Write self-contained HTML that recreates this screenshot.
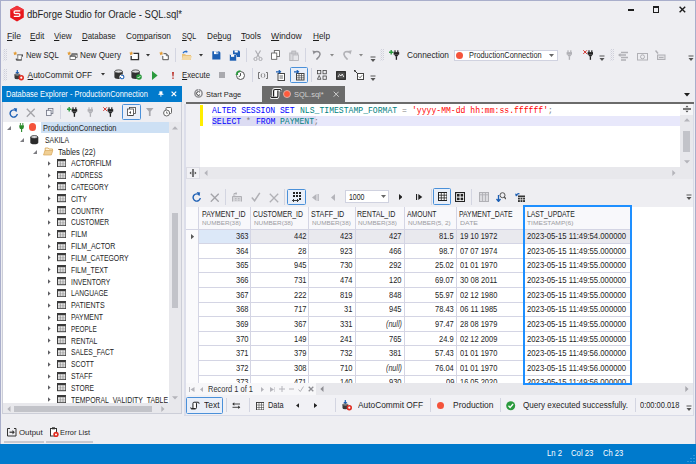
<!DOCTYPE html>
<html lang="en"><head><meta charset="utf-8"><title>dbForge Studio for Oracle - SQL.sql*</title>
<style>html,body{margin:0;padding:0}body{width:696px;height:464px;overflow:hidden;position:relative;background:#eeeef2;font-family:"Liberation Sans",sans-serif}
.a{position:absolute;display:block}
.t{position:absolute;white-space:pre;transform-origin:0 0}
u{text-decoration:underline;text-underline-offset:.6px;text-decoration-thickness:.8px}</style></head>
<body>
<div class="a" style="left:0px;top:0px;width:696px;height:464px;background:#eeeef2;"></div>
<div class="a" style="left:0px;top:0px;width:696px;height:1px;background:#a9aecb;"></div>
<div class="a" style="left:0px;top:0px;width:1px;height:464px;background:#a9aecb;"></div>
<div class="a" style="left:695px;top:0px;width:1px;height:464px;background:#a9aecb;"></div>
<svg class="a" style="left:9px;top:5px" width="16" height="18" viewBox="0 0 16 18"><polygon points="8,0.8 14.8,4.6 14.8,12.6 8,16.6 1.2,12.6 1.2,4.6" fill="#e8161c"/><polygon points="8,0.8 14.8,4.6 8,8.6 1.2,4.6" fill="#f0353a"/><path d="M11.2 5.9H6.4a1.35 1.35 0 0 0 0 2.7h3.2a1.35 1.35 0 0 1 0 2.7H4.8" fill="none" stroke="#fff" stroke-width="1.3"/></svg>
<span class="t" style="left:27.00px;top:10.00px;font-size:10px;line-height:10px;color:#1e1e1e;transform:scaleX(0.9485);">dbForge Studio for Oracle - SQL.sql*</span>
<div class="a" style="left:628px;top:9.4px;width:6.4px;height:2px;background:#1e1e1e;"></div>
<div class="a" style="left:652.8px;top:6.3px;width:6.4px;height:6.4px;border:1px solid #1e1e1e;box-sizing:border-box;border-top-width:2px;"></div>
<svg class="a" style="left:678px;top:5px" width="9" height="9" viewBox="0 0 9 9"><path d="M1.6 1.8L7.2 7.2M7.2 1.8L1.6 7.2" stroke="#1e1e1e" stroke-width="1.4" fill="none"/></svg>
<span class="t" style="left:6.70px;top:32.00px;font-size:8.4px;line-height:8.4px;color:#1e1e1e;transform:scaleX(1.0370);"><u>F</u>ile</span>
<span class="t" style="left:30.00px;top:32.00px;font-size:8.4px;line-height:8.4px;color:#1e1e1e;transform:scaleX(0.9905);"><u>E</u>dit</span>
<span class="t" style="left:54.00px;top:32.00px;font-size:8.4px;line-height:8.4px;color:#1e1e1e;transform:scaleX(0.9825);"><u>V</u>iew</span>
<span class="t" style="left:82.00px;top:32.00px;font-size:8.4px;line-height:8.4px;color:#1e1e1e;transform:scaleX(0.9398);"><u>D</u>atabase</span>
<span class="t" style="left:126.00px;top:32.00px;font-size:8.4px;line-height:8.4px;color:#1e1e1e;transform:scaleX(0.9965);">Co<u>m</u>parison</span>
<span class="t" style="left:181.70px;top:32.00px;font-size:8.4px;line-height:8.4px;color:#1e1e1e;transform:scaleX(0.8529);"><u>S</u>QL</span>
<span class="t" style="left:206.70px;top:32.00px;font-size:8.4px;line-height:8.4px;color:#1e1e1e;transform:scaleX(0.9843);">De<u>b</u>ug</span>
<span class="t" style="left:241.30px;top:32.00px;font-size:8.4px;line-height:8.4px;color:#1e1e1e;transform:scaleX(1.0224);"><u>T</u>ools</span>
<span class="t" style="left:271.30px;top:32.00px;font-size:8.4px;line-height:8.4px;color:#1e1e1e;transform:scaleX(1.0303);"><u>W</u>indow</span>
<span class="t" style="left:312.70px;top:32.00px;font-size:8.4px;line-height:8.4px;color:#1e1e1e;transform:scaleX(0.9864);"><u>H</u>elp</span>
<div class="a" style="left:3px;top:49px;width:4px;height:12px;background:conic-gradient(#cfd0db 25%,#eeeef2 0 50%,#e0e1e9 0 75%,#eeeef2 0) 0 0/2px 2px;"></div>
<div class="a" style="left:3px;top:69px;width:4px;height:12px;background:conic-gradient(#cfd0db 25%,#eeeef2 0 50%,#e0e1e9 0 75%,#eeeef2 0) 0 0/2px 2px;"></div>
<div class="a" style="left:380px;top:49px;width:4px;height:12px;background:conic-gradient(#cfd0db 25%,#eeeef2 0 50%,#e0e1e9 0 75%,#eeeef2 0) 0 0/2px 2px;"></div>
<div class="a" style="left:609.5px;top:49px;width:4px;height:12px;background:conic-gradient(#cfd0db 25%,#eeeef2 0 50%,#e0e1e9 0 75%,#eeeef2 0) 0 0/2px 2px;"></div>
<!--tb1-->
<span class="t" style="left:25.90px;top:51.00px;font-size:8.3px;line-height:8.3px;color:#1e1e1e;transform:scaleX(0.9207);">New SQL</span>
<span class="t" style="left:80.20px;top:51.00px;font-size:8.3px;line-height:8.3px;color:#1e1e1e;transform:scaleX(0.9880);">New Query</span>
<span class="t" style="left:407.00px;top:51.00px;font-size:8.3px;line-height:8.3px;color:#1e1e1e;">Connection</span>
<div class="a" style="left:453.5px;top:50px;width:104.5px;height:11.3px;background:#fff;border:1px solid #d0d2e0;box-sizing:border-box;"></div>
<div class="a" style="left:456px;top:52.2px;width:7px;height:7px;background:#f4533b;border-radius:3.5px;"></div>
<span class="t" style="left:469.00px;top:51.00px;font-size:8.3px;line-height:8.3px;color:#1e1e1e;transform:scaleX(0.8905);">ProductionConnection</span>
<svg class="a" style="left:549.2px;top:54px" width="5" height="3.5" viewBox="0 0 5 3.5"><path d="M0 0h5L2.5 3z" fill="#666"/></svg>
<span class="t" style="left:27.60px;top:71.00px;font-size:8.3px;line-height:8.3px;color:#1e1e1e;"><u>A</u>utoCommit OFF</span>
<span class="t" style="left:181.50px;top:71.00px;font-size:8.3px;line-height:8.3px;color:#1e1e1e;transform:scaleX(0.9338);"><u>E</u>xecute</span>
<svg class="a" style="left:101.4px;top:73px" width="4" height="3" viewBox="0 0 4 3"><path d="M0 0h4.0L2.0 2.5z" fill="#333"/></svg>
<svg class="a" style="left:146.4px;top:54px" width="4" height="3" viewBox="0 0 4 3"><path d="M0 0h4.0L2.0 2.5z" fill="#333"/></svg>
<svg class="a" style="left:199.4px;top:54px" width="4" height="3" viewBox="0 0 4 3"><path d="M0 0h4.0L2.0 2.5z" fill="#333"/></svg>
<svg class="a" style="left:329.7px;top:54px" width="4" height="3" viewBox="0 0 4 3"><path d="M0 0h4.0L2.0 2.5z" fill="#888"/></svg>
<svg class="a" style="left:359.4px;top:54px" width="4" height="3" viewBox="0 0 4 3"><path d="M0 0h4.0L2.0 2.5z" fill="#888"/></svg>
<svg class="a" style="left:370px;top:55.7px" width="6" height="7" viewBox="0 0 6 7"><rect x="0.5" y="0.5" width="5" height="1" fill="#555"/><path d="M0.5 3h5L3 6z" fill="#555"/></svg>
<svg class="a" style="left:370px;top:74.6px" width="6" height="7" viewBox="0 0 6 7"><rect x="0.5" y="0.5" width="5" height="1" fill="#555"/><path d="M0.5 3h5L3 6z" fill="#555"/></svg>
<svg class="a" style="left:599.4px;top:54.7px" width="6" height="7" viewBox="0 0 6 7"><rect x="0.5" y="0.5" width="5" height="1" fill="#555"/><path d="M0.5 3h5L3 6z" fill="#555"/></svg>
<svg class="a" style="left:687.5px;top:54.7px" width="6" height="7" viewBox="0 0 6 7"><rect x="0.5" y="0.5" width="5" height="1" fill="#555"/><path d="M0.5 3h5L3 6z" fill="#555"/></svg>
<div class="a" style="left:175px;top:48px;width:1px;height:14px;background:#d3d5e1;"></div>
<div class="a" style="left:245.5px;top:48px;width:1px;height:14px;background:#d3d5e1;"></div>
<div class="a" style="left:305px;top:48px;width:1px;height:14px;background:#d3d5e1;"></div>
<div class="a" style="left:251.5px;top:68px;width:1px;height:14px;background:#d3d5e1;"></div>
<div class="a" style="left:310.8px;top:68px;width:1px;height:14px;background:#d3d5e1;"></div>
<svg class="a" style="left:12.5px;top:50.8px" width="11" height="11" viewBox="0 0 11 11"><path d="M2.2 .2l.6 1.4 1.5.2-1.1 1 .3 1.5-1.3-.8-1.3.8.3-1.5-1.1-1 1.5-.2z" fill="#e29a32"/><path d="M4.2 4h5.8M9.2 4.2v1.6" stroke="#333" stroke-width="1.1" fill="none"/><rect x="4.8" y="4.5" width="3.6" height="4.2" fill="#fff"/><path d="M4.8 4.5v4.2M8.4 5.5v3.3" stroke="#555" stroke-width=".7"/><path d="M3.3 9h5.4" stroke="#333" stroke-width="1.2"/><path d="M3.3 7.5v1.5" stroke="#333" stroke-width=".9"/></svg>
<svg class="a" style="left:66.8px;top:50.8px" width="11" height="11" viewBox="0 0 11 11"><path d="M2.2 .2l.6 1.4 1.5.2-1.1 1 .3 1.5-1.3-.8-1.3.8.3-1.5-1.1-1 1.5-.2z" fill="#e29a32"/><rect x="4.8" y="2.8" width="5.3" height="3.8" fill="#fff" stroke="#444" stroke-width=".7"/><path d="M4.8 3.3h5.3" stroke="#444" stroke-width=".8"/><rect x="3" y="4.8" width="5.3" height="3.8" fill="#fff" stroke="#444" stroke-width=".7"/><path d="M3 5.3h5.3" stroke="#444" stroke-width=".8"/></svg>
<svg class="a" style="left:128.5px;top:50.8px" width="11" height="11" viewBox="0 0 11 11"><path d="M2.2 .2l.6 1.4 1.5.2-1.1 1 .3 1.5-1.3-.8-1.3.8.3-1.5-1.1-1 1.5-.2z" fill="#e29a32"/><path d="M4.5 2.4h5v6.2H2.2V5" fill="#fff" stroke="#333" stroke-width="1.3"/></svg>
<svg class="a" style="left:158.7px;top:50.8px" width="11" height="11" viewBox="0 0 11 11"><path d="M2.2 .2l.6 1.4 1.5.2-1.1 1 .3 1.5-1.3-.8-1.3.8.3-1.5-1.1-1 1.5-.2z" fill="#e29a32"/><path d="M4.5 2.7h2.8l2 2v4H3.8V5" fill="#fff" stroke="#444" stroke-width=".9"/><path d="M7.3 2.7v2h2" fill="none" stroke="#444" stroke-width=".7"/></svg>
<svg class="a" style="left:181px;top:49.5px" width="12" height="11" viewBox="0 0 12 11"><path d="M1 4h3l1 1h5v5H1z" fill="#e9c27c"/><path d="M.5 10l1.5-4h9l-1.5 4z" fill="#f3d9a6"/><path d="M2 3.2a3 3 0 0 1 4-1.5" stroke="#2a6fc9" fill="none" stroke-width="1.2"/><path d="M5 .2l2 1.8-2.4.8z" fill="#2a6fc9"/></svg>
<svg class="a" style="left:211.8px;top:50.8px" width="9" height="9" viewBox="0 0 9 9"><path d="M.3 .3h6.8l1.3 1.3v7h-8.1z" fill="#1c5fb4"/><rect x="2" y=".3" width="4.2" height="2.8" fill="#fff"/><rect x="4.5" y=".8" width="1.1" height="1.8" fill="#1c5fb4"/></svg>
<svg class="a" style="left:229px;top:49.5px" width="12" height="12" viewBox="0 0 12 12"><path d="M4 .5h6l1 1v5.5h-7z" fill="#1c5fb4"/><rect x="5.6" y=".5" width="3.2" height="2" fill="#fff"/><path d="M.5 4.5h6l1 1v5.5h-7z" fill="#1c5fb4" stroke="#eeeef2" stroke-width=".6"/><rect x="2" y="4.6" width="3.2" height="2.2" fill="#fff"/></svg>
<svg class="a" style="left:253px;top:49.5px" width="10" height="11" viewBox="0 0 10 11"><path d="M2.5 .5l4 7M7.5 .5l-4 7" stroke="#a9a9ae" stroke-width="1.1" fill="none"/><circle cx="2.5" cy="9" r="1.6" fill="none" stroke="#a9a9ae"/><circle cx="7.5" cy="9" r="1.6" fill="none" stroke="#a9a9ae"/></svg>
<svg class="a" style="left:271px;top:50.3px" width="10" height="10" viewBox="0 0 10 10"><rect x="3.3" y=".6" width="5.2" height="6" fill="#fff" stroke="#555" stroke-width=".8"/><rect x=".6" y="3" width="5.2" height="6.3" fill="#fff" stroke="#555" stroke-width=".8"/></svg>
<svg class="a" style="left:288.5px;top:49.5px" width="10.5" height="11" viewBox="0 0 10.5 11"><rect x=".8" y="3" width="8" height="7.5" fill="#d9d9dd" stroke="#b4b4b9"/><rect x="2.8" y="1" width="4" height="3" fill="#c9c9cd" stroke="#b4b4b9" stroke-width=".8"/><rect x="4" y="5" width="5.5" height="5.5" fill="#e6e6ea" stroke="#b4b4b9" stroke-width=".8"/></svg>
<svg class="a" style="left:312px;top:50px" width="10" height="10" viewBox="0 0 10 10"><path d="M2 2.2c3.5-1.5 6.3-.3 6 2.3-.2 2-2 3.5-3.6 5" stroke="#8e8e93" stroke-width="1.5" fill="none"/><path d="M.4 .6l3.8 .6-2.6 3.3z" fill="#8e8e93"/></svg>
<svg class="a" style="left:342px;top:50px" width="10" height="10" viewBox="0 0 10 10"><path d="M8 2.2c-3.5-1.5-6.3-.3-6 2.3.2 2 2 3.5 3.6 5" stroke="#b2b2b7" stroke-width="1.7" fill="none"/><path d="M9.8 .3l-4.2 .7 2.9 3.6z" fill="#b2b2b7"/></svg>
<svg class="a" style="left:389.4px;top:50.2px" width="10.5" height="10" viewBox="0 0 10.5 10"><g transform="translate(4.6,0.3)" fill="#222"><rect x=".8" y="0" width="1.2" height="2"/><rect x="3.6" y="0" width="1.2" height="2"/><rect x="0" y="1.8" width="5.6" height="2.5"/><path d="M.4 4.3h4.8L3.6 6.2H2z"/><rect x="2.15" y="6" width="1.3" height="3.5"/></g><path d="M0 2.3h4.4M2.2 .1v4.4" stroke="#2b9a3e" stroke-width="1.4"/></svg>
<svg class="a" style="left:561.8px;top:50.4px" width="10.5" height="10" viewBox="0 0 10.5 10"><g transform="translate(4.6,0.3)" fill="#b0b0b5"><rect x=".8" y="0" width="1.2" height="2"/><rect x="3.6" y="0" width="1.2" height="2"/><rect x="0" y="1.8" width="5.6" height="2.5"/><path d="M.4 4.3h4.8L3.6 6.2H2z"/><rect x="2.15" y="6" width="1.3" height="3.5"/></g></svg>
<svg class="a" style="left:582.6px;top:50.2px" width="10.5" height="10" viewBox="0 0 10.5 10"><g transform="translate(4.6,0.3)" fill="#222"><rect x=".8" y="0" width="1.2" height="2"/><rect x="3.6" y="0" width="1.2" height="2"/><rect x="0" y="1.8" width="5.6" height="2.5"/><path d="M.4 4.3h4.8L3.6 6.2H2z"/><rect x="2.15" y="6" width="1.3" height="3.5"/></g><path d="M.3 .3l3.6 3.6M3.9 .3L.3 3.9" stroke="#d2322d" stroke-width="1"/></svg>
<svg class="a" style="left:618px;top:50.5px" width="10.5" height="10.5" viewBox="0 0 10.5 10.5"><path d="M3 1.5h7M1 4h7M3 6.5h7M3 9h5" stroke="#b0b0b5" stroke-width="1.3"/><path d="M0 4l2.5-2v4z" fill="#b0b0b5"/></svg>
<svg class="a" style="left:636.5px;top:51.5px" width="11" height="9" viewBox="0 0 11 9"><rect x=".5" y="1.5" width="10" height="6.5" fill="none" stroke="#b0b0b5"/><circle cx="5.5" cy="4.8" r="2" fill="none" stroke="#b0b0b5"/></svg>
<svg class="a" style="left:655px;top:50px" width="10.5" height="10.5" viewBox="0 0 10.5 10.5"><path d="M.5 .5l2.5 3" stroke="#b0b0b5" stroke-width="1.5"/><rect x="2.5" y="5" width="7.5" height="4.5" fill="#dedee2" stroke="#b0b0b5"/><path d="M4 7.5h4.5" stroke="#b0b0b5"/></svg>
<svg class="a" style="left:14px;top:70px" width="10.5" height="10.5" viewBox="0 0 10.5 10.5"><path d="M3.3 0v3.2" stroke="#1c5fb4" stroke-width="1.2"/><path d="M1.3 2l2 2.2 2-2.2z" fill="#1c5fb4"/><path d="M.5 4.8v3.2a2.8 1.2 0 0 0 5.6 0V4.8" fill="#3a3a3a"/><ellipse cx="3.3" cy="4.8" rx="2.8" ry="1.1" fill="#8a8a8e" stroke="#3a3a3a" stroke-width=".5"/><circle cx="7.3" cy="7.7" r="2.7" fill="#e02b20"/><circle cx="7.3" cy="7.7" r="1.1" fill="#fff"/></svg>
<svg class="a" style="left:113.8px;top:69.3px" width="11.5" height="11" viewBox="0 0 11.5 11"><path d="M.4 2.5v5.5a4.2 1.9 0 0 0 8.4 0v-5.5" fill="#333"/><ellipse cx="4.6" cy="2.5" rx="3.8" ry="1.6" fill="#dcdcde" stroke="#333" stroke-width=".8"/><circle cx="8" cy="8" r="2.6" fill="#fff"/><path d="M6.3 8a1.8 1.8 0 1 0 1-1.6" stroke="#1c5fb4" fill="none" stroke-width="1.1"/></svg>
<svg class="a" style="left:131.2px;top:69.3px" width="11.5" height="11" viewBox="0 0 11.5 11"><path d="M.4 2.5v5.5a4.2 1.9 0 0 0 8.4 0v-5.5" fill="#333"/><ellipse cx="4.6" cy="2.5" rx="3.8" ry="1.6" fill="#dcdcde" stroke="#333" stroke-width=".8"/><circle cx="8" cy="8" r="2.8" fill="#2b9a3e"/><path d="M6.6 8l1 1 1.8-2" stroke="#fff" fill="none" stroke-width=".9"/></svg>
<svg class="a" style="left:152px;top:70.5px" width="6" height="9" viewBox="0 0 6 9"><path d="M0 0l5.6 4.5L0 9z" fill="#2b9a3e"/></svg>
<svg class="a" style="left:171.6px;top:71.7px" width="2" height="7" viewBox="0 0 2 7"><path d="M.1 0h1.8l-.4 4.5H.5z" fill="#b8261e"/><rect x=".35" y="5.5" width="1.3" height="1.4" fill="#b8261e"/></svg>
<div class="a" style="left:219px;top:72px;width:6px;height:6px;background:#a9a9ae;"></div>
<svg class="a" style="left:235px;top:69.5px" width="11" height="11" viewBox="0 0 11 11"><circle cx="5.5" cy="5.5" r="4" fill="#fff" stroke="#555" stroke-width="1"/><path d="M5.5 3.2v2.5l-1.8 1" stroke="#333" fill="none" stroke-width=".9"/><path d="M.3 4.5l2.5-2.5.4 3.3z" fill="#2b9a3e"/><path d="M1.5 3.5a4.3 4.3 0 0 1 4-2.5" stroke="#2b9a3e" fill="none" stroke-width="1.3"/></svg>
<svg class="a" style="left:258px;top:71.5px" width="10" height="7" viewBox="0 0 10 7"><path d="M2 .5H.5v6H2M8 .5h1.5v6H8" stroke="#555" fill="none" stroke-width=".8"/><path d="M4 1.5c-1 1-1 3 0 4M6 1.5c1 1 1 3 0 4" stroke="#555" fill="none" stroke-width=".8"/></svg>
<svg class="a" style="left:276px;top:69.5px" width="10" height="11" viewBox="0 0 10 11"><rect x="2" y="3.5" width="6.5" height="7" fill="#fff" stroke="#444"/><path d="M3.5 6h3.5M3.5 8h3.5" stroke="#444" stroke-width=".8"/><path d="M0 1.8h4M2.8 .2l1.7 1.6-1.7 1.6" stroke="#1c5fb4" fill="none" stroke-width="1.2"/></svg>
<div class="a" style="left:289.8px;top:67.3px;width:18.6px;height:16px;background:#e9eff9;border:1px solid #4a90d9;box-sizing:border-box;border-radius:1.5px;"></div>
<svg class="a" style="left:294px;top:70px" width="11" height="11" viewBox="0 0 11 11"><rect x="2.5" y="3.5" width="7.5" height="6.5" fill="#fff" stroke="#444"/><path d="M2.5 5.7h7.5M2.5 7.8h7.5M5 3.5v6.5M7.5 3.5v6.5" stroke="#444" stroke-width=".7"/><path d="M0 1.8h4M2.8 .2l1.7 1.6-1.7 1.6" stroke="#1c5fb4" fill="none" stroke-width="1.2"/></svg>
<svg class="a" style="left:317px;top:70px" width="10" height="10.5" viewBox="0 0 10 10.5"><rect x=".5" y=".5" width="3.3" height="3.3" fill="none" stroke="#444" stroke-width=".8"/><rect x="6" y=".5" width="3.3" height="3.3" fill="none" stroke="#444" stroke-width=".8"/><rect x="6" y="6" width="3.3" height="3.3" fill="none" stroke="#444" stroke-width=".8"/><path d="M2.2 5.5l1.8 3.8H.4z" fill="none" stroke="#444" stroke-width=".8"/></svg>
<svg class="a" style="left:335.5px;top:70.5px" width="10" height="9" viewBox="0 0 10 9"><rect x=".7" y=".7" width="8.6" height="7.6" fill="#555" stroke="#222" stroke-width="1.2"/><path d="M2 6l1.5-2.5 1.5 1.5 1.2-2 1.6 3" stroke="#fff" fill="none" stroke-width=".8"/></svg>
<svg class="a" style="left:353.5px;top:70px" width="10" height="10" viewBox="0 0 10 10"><rect x="3.5" y="3.5" width="6" height="6" fill="#fff" stroke="#444"/><path d="M4.8 6.5l1.3 1.3 2-2.5" stroke="#444" fill="none" stroke-width=".8"/><path d="M.5 .5l2.5 2.5" stroke="#333"/><rect x="0" y="0" width="1.6" height="1.6" fill="#333"/></svg>
<div class="a" style="left:2px;top:86px;width:180px;height:328px;background:#fff;border:1px solid #ccced8;box-sizing:border-box;"></div>
<div class="a" style="left:2px;top:86px;width:180px;height:15.5px;background:#007acc;"></div>
<span class="t" style="left:5.80px;top:90.00px;font-size:8.3px;line-height:8.3px;color:#fff;transform:scaleX(0.8996);">Database Explorer - ProductionConnection</span>
<svg class="a" style="left:158.4px;top:91px" width="6" height="6" viewBox="0 0 6 6"><path d="M1.4 .3h3v2.8h-3z" fill="#fff"/><path d="M.4 3.3h5" stroke="#fff" stroke-width="1"/><path d="M2.9 3.5v2.2" stroke="#fff" stroke-width=".9"/></svg>
<svg class="a" style="left:171.3px;top:90.6px" width="6" height="6" viewBox="0 0 6 6"><path d="M.6 .6l4.6 4.6M5.2 .6L.6 5.2" stroke="#fff" stroke-width="1.2"/></svg>
<div class="a" style="left:3px;top:101.5px;width:178px;height:20.4px;background:#eeeef2;"></div>
<svg class="a" style="left:8.5px;top:107.5px" width="9.5" height="10" viewBox="0 0 9.5 10"><path d="M7.6 3.3A3.6 3.6 0 1 0 8.3 6" stroke="#1c5fb4" fill="none" stroke-width="1.4"/><path d="M4.6 .1l3.6 .4-.9 3.2z" fill="#1c5fb4"/></svg>
<svg class="a" style="left:26px;top:108px" width="9.5" height="9.5" viewBox="0 0 9.5 9.5"><path d="M.8 .8L8.7 8.7M8.7 .8L.8 8.7" stroke="#a3a3a8" stroke-width="1.3"/></svg>
<svg class="a" style="left:46.3px;top:108.3px" width="8" height="8.5" viewBox="0 0 8 8.5"><rect x="2.3" y=".5" width="4.6" height="5" fill="#f4f6fb" stroke="#6d7180" stroke-width=".8"/><rect x=".5" y="2.3" width="4.6" height="5.2" fill="#f4f6fb" stroke="#6d7180" stroke-width=".8"/></svg>
<div class="a" style="left:60px;top:105px;width:1px;height:14px;background:#d3d5e1;"></div>
<svg class="a" style="left:67px;top:107px" width="10.5" height="10" viewBox="0 0 10.5 10"><g transform="translate(4.6,0.3)" fill="#222"><rect x=".8" y="0" width="1.2" height="2"/><rect x="3.6" y="0" width="1.2" height="2"/><rect x="0" y="1.8" width="5.6" height="2.5"/><path d="M.4 4.3h4.8L3.6 6.2H2z"/><rect x="2.15" y="6" width="1.3" height="3.5"/></g><path d="M0 2.3h4.4M2.2 .1v4.4" stroke="#2b9a3e" stroke-width="1.4"/></svg>
<svg class="a" style="left:82.8px;top:107.2px" width="10.5" height="10" viewBox="0 0 10.5 10"><g transform="translate(4.6,0.3)" fill="#b0b0b5"><rect x=".8" y="0" width="1.2" height="2"/><rect x="3.6" y="0" width="1.2" height="2"/><rect x="0" y="1.8" width="5.6" height="2.5"/><path d="M.4 4.3h4.8L3.6 6.2H2z"/><rect x="2.15" y="6" width="1.3" height="3.5"/></g></svg>
<svg class="a" style="left:103.4px;top:107px" width="10.5" height="10" viewBox="0 0 10.5 10"><g transform="translate(4.6,0.3)" fill="#222"><rect x=".8" y="0" width="1.2" height="2"/><rect x="3.6" y="0" width="1.2" height="2"/><rect x="0" y="1.8" width="5.6" height="2.5"/><path d="M.4 4.3h4.8L3.6 6.2H2z"/><rect x="2.15" y="6" width="1.3" height="3.5"/></g><path d="M.3 .3l3.6 3.6M3.9 .3L.3 3.9" stroke="#d2322d" stroke-width="1"/></svg>
<div class="a" style="left:122.3px;top:103.6px;width:18.4px;height:16.7px;background:#e9eff9;border:1px solid #4a90d9;box-sizing:border-box;border-radius:1.5px;"></div>
<svg class="a" style="left:126.5px;top:107px" width="10" height="10" viewBox="0 0 10 10"><rect x="2.5" y=".5" width="6" height="6" fill="#fff" stroke="#444" stroke-width=".8"/><rect x=".5" y="2" width="6" height="6.5" fill="#fff" stroke="#444" stroke-width=".8"/><path d="M2 5.5l2-1.5v3z" fill="#444"/><path d="M2 8.5h4" stroke="#444"/></svg>
<svg class="a" style="left:146px;top:108px" width="8" height="9" viewBox="0 0 8 9"><path d="M0 0h7.5L4.6 3.5V8H2.9V3.5z" fill="#a9a9ae"/></svg>
<svg class="a" style="left:162.5px;top:107px" width="9.5" height="10" viewBox="0 0 9.5 10"><rect x="3" y=".5" width="5.5" height="6" rx="1" fill="#fff" stroke="#555" stroke-width=".9"/><circle cx="3.6" cy="6" r="3" fill="#fff" stroke="#555" stroke-width=".9"/><path d="M3.6 4.5v1.7h1.3" stroke="#555" fill="none" stroke-width=".8"/></svg>
<div class="a" style="left:40.5px;top:121.9px;width:128.5px;height:11.3px;background:#cde0f4;"></div>
<svg class="a" style="left:7px;top:125.9px" width="4.5" height="4.5" viewBox="0 0 4.5 4.5"><path d="M4 0v4H0z" fill="#7d7d82"/></svg>
<svg class="a" style="left:19.3px;top:122.6px" width="5.5" height="9.5" viewBox="0 0 5.5 9.5"><path d="M1.4 0v2.5M3.8 0v2.5" stroke="#2a8a2a" stroke-width=".9"/><path d="M.3 2.3h4.6v1.8a2.3 2.2 0 0 1-4.6 0z" fill="#2a8a2a"/><path d="M2.6 6v3.3" stroke="#2a8a2a" stroke-width="1.1"/></svg>
<div class="a" style="left:29px;top:123.4px;width:7.2px;height:7.2px;background:#f4533b;border-radius:3.6px;"></div>
<span class="t" style="left:42.50px;top:124.00px;font-size:8.3px;line-height:8.3px;color:#1e1e1e;transform:scaleX(0.9003);">ProductionConnection</span>
<svg class="a" style="left:20px;top:137.72px" width="4.5" height="4.5" viewBox="0 0 4.5 4.5"><path d="M4 0v4H0z" fill="#7d7d82"/></svg>
<svg class="a" style="left:30.4px;top:135.02px" width="8.6" height="9.6" viewBox="0 0 8.6 9.6"><path d="M.3 2v5.5a4 1.8 0 0 0 8 0V2" fill="#2b2b2b"/><ellipse cx="4.3" cy="2" rx="3.6" ry="1.4" fill="#e6e6e8" stroke="#2b2b2b" stroke-width=".8"/></svg>
<span class="t" style="left:45.00px;top:136.00px;font-size:8.3px;line-height:8.3px;color:#1e1e1e;transform:scaleX(0.8258);">SAKILA</span>
<svg class="a" style="left:33px;top:149.54px" width="4.5" height="4.5" viewBox="0 0 4.5 4.5"><path d="M4 0v4H0z" fill="#7d7d82"/></svg>
<svg class="a" style="left:43px;top:146.54px" width="10.5" height="9" viewBox="0 0 10.5 9"><path d="M2.2 7.5V1h3l.8 1h3.5v1.5" fill="#fdf3dc" stroke="#d9a85a" stroke-width=".9"/><path d="M.5 8l1.5-4.5h7.8L8.3 8z" fill="#f0cf94" stroke="#d9a85a" stroke-width=".7"/></svg>
<span class="t" style="left:58.30px;top:148.00px;font-size:8.3px;line-height:8.3px;color:#1e1e1e;transform:scaleX(0.9112);">Tables (22)</span>
<div class="a" style="left:3px;top:121.9px;width:166px;height:281.3px;overflow:hidden">
<svg class="a" style="left:44.7px;top:38.96px" width="3.5" height="5"><path d="M0 .3l2.600 2.200L0 4.700z" fill="#5f5f64"/></svg>
<svg class="a" style="left:53.7px;top:36.96px" width="9.5" height="8.5"><rect x=".5" y=".5" width="8.3" height="7.2" fill="#fff" stroke="#3a3a3a" stroke-width="1"/><rect x=".5" y=".5" width="8.3" height="1.8" fill="#3a3a3a"/><path d="M.5 4.2h8.3M.5 6h8.3M3.3 2.3v5.4M6 2.3v5.4" stroke="#666" stroke-width=".5"/></svg>
<span class="t" style="left:68.30px;top:37.10px;font-size:8.3px;line-height:8.3px;color:#1e1e1e;transform:scaleX(0.8452);">ACTORFILM</span>
<svg class="a" style="left:44.7px;top:50.78px" width="3.5" height="5"><path d="M0 .3l2.600 2.200L0 4.700z" fill="#5f5f64"/></svg>
<svg class="a" style="left:53.7px;top:48.78px" width="9.5" height="8.5"><rect x=".5" y=".5" width="8.3" height="7.2" fill="#fff" stroke="#3a3a3a" stroke-width="1"/><rect x=".5" y=".5" width="8.3" height="1.8" fill="#3a3a3a"/><path d="M.5 4.2h8.3M.5 6h8.3M3.3 2.3v5.4M6 2.3v5.4" stroke="#666" stroke-width=".5"/></svg>
<span class="t" style="left:68.30px;top:49.10px;font-size:8.3px;line-height:8.3px;color:#1e1e1e;transform:scaleX(0.7900);">ADDRESS</span>
<svg class="a" style="left:44.7px;top:62.60px" width="3.5" height="5"><path d="M0 .3l2.600 2.200L0 4.700z" fill="#5f5f64"/></svg>
<svg class="a" style="left:53.7px;top:60.60px" width="9.5" height="8.5"><rect x=".5" y=".5" width="8.3" height="7.2" fill="#fff" stroke="#3a3a3a" stroke-width="1"/><rect x=".5" y=".5" width="8.3" height="1.8" fill="#3a3a3a"/><path d="M.5 4.2h8.3M.5 6h8.3M3.3 2.3v5.4M6 2.3v5.4" stroke="#666" stroke-width=".5"/></svg>
<span class="t" style="left:68.30px;top:61.10px;font-size:8.3px;line-height:8.3px;color:#1e1e1e;transform:scaleX(0.8166);">CATEGORY</span>
<svg class="a" style="left:44.7px;top:74.42px" width="3.5" height="5"><path d="M0 .3l2.600 2.200L0 4.700z" fill="#5f5f64"/></svg>
<svg class="a" style="left:53.7px;top:72.42px" width="9.5" height="8.5"><rect x=".5" y=".5" width="8.3" height="7.2" fill="#fff" stroke="#3a3a3a" stroke-width="1"/><rect x=".5" y=".5" width="8.3" height="1.8" fill="#3a3a3a"/><path d="M.5 4.2h8.3M.5 6h8.3M3.3 2.3v5.4M6 2.3v5.4" stroke="#666" stroke-width=".5"/></svg>
<span class="t" style="left:68.30px;top:73.10px;font-size:8.3px;line-height:8.3px;color:#1e1e1e;transform:scaleX(0.8463);">CITY</span>
<svg class="a" style="left:44.7px;top:86.24px" width="3.5" height="5"><path d="M0 .3l2.600 2.200L0 4.700z" fill="#5f5f64"/></svg>
<svg class="a" style="left:53.7px;top:84.24px" width="9.5" height="8.5"><rect x=".5" y=".5" width="8.3" height="7.2" fill="#fff" stroke="#3a3a3a" stroke-width="1"/><rect x=".5" y=".5" width="8.3" height="1.8" fill="#3a3a3a"/><path d="M.5 4.2h8.3M.5 6h8.3M3.3 2.3v5.4M6 2.3v5.4" stroke="#666" stroke-width=".5"/></svg>
<span class="t" style="left:68.30px;top:85.10px;font-size:8.3px;line-height:8.3px;color:#1e1e1e;transform:scaleX(0.8073);">COUNTRY</span>
<svg class="a" style="left:44.7px;top:98.06px" width="3.5" height="5"><path d="M0 .3l2.600 2.200L0 4.700z" fill="#5f5f64"/></svg>
<svg class="a" style="left:53.7px;top:96.06px" width="9.5" height="8.5"><rect x=".5" y=".5" width="8.3" height="7.2" fill="#fff" stroke="#3a3a3a" stroke-width="1"/><rect x=".5" y=".5" width="8.3" height="1.8" fill="#3a3a3a"/><path d="M.5 4.2h8.3M.5 6h8.3M3.3 2.3v5.4M6 2.3v5.4" stroke="#666" stroke-width=".5"/></svg>
<span class="t" style="left:68.30px;top:96.10px;font-size:8.3px;line-height:8.3px;color:#1e1e1e;transform:scaleX(0.8029);">CUSTOMER</span>
<svg class="a" style="left:44.7px;top:109.88px" width="3.5" height="5"><path d="M0 .3l2.600 2.200L0 4.700z" fill="#5f5f64"/></svg>
<svg class="a" style="left:53.7px;top:107.88px" width="9.5" height="8.5"><rect x=".5" y=".5" width="8.3" height="7.2" fill="#fff" stroke="#3a3a3a" stroke-width="1"/><rect x=".5" y=".5" width="8.3" height="1.8" fill="#3a3a3a"/><path d="M.5 4.2h8.3M.5 6h8.3M3.3 2.3v5.4M6 2.3v5.4" stroke="#666" stroke-width=".5"/></svg>
<span class="t" style="left:68.30px;top:108.10px;font-size:8.3px;line-height:8.3px;color:#1e1e1e;transform:scaleX(0.8463);">FILM</span>
<svg class="a" style="left:44.7px;top:121.70px" width="3.5" height="5"><path d="M0 .3l2.600 2.200L0 4.700z" fill="#5f5f64"/></svg>
<svg class="a" style="left:53.7px;top:119.70px" width="9.5" height="8.5"><rect x=".5" y=".5" width="8.3" height="7.2" fill="#fff" stroke="#3a3a3a" stroke-width="1"/><rect x=".5" y=".5" width="8.3" height="1.8" fill="#3a3a3a"/><path d="M.5 4.2h8.3M.5 6h8.3M3.3 2.3v5.4M6 2.3v5.4" stroke="#666" stroke-width=".5"/></svg>
<span class="t" style="left:68.30px;top:120.10px;font-size:8.3px;line-height:8.3px;color:#1e1e1e;transform:scaleX(0.8472);">FILM_ACTOR</span>
<svg class="a" style="left:44.7px;top:133.52px" width="3.5" height="5"><path d="M0 .3l2.600 2.200L0 4.700z" fill="#5f5f64"/></svg>
<svg class="a" style="left:53.7px;top:131.52px" width="9.5" height="8.5"><rect x=".5" y=".5" width="8.3" height="7.2" fill="#fff" stroke="#3a3a3a" stroke-width="1"/><rect x=".5" y=".5" width="8.3" height="1.8" fill="#3a3a3a"/><path d="M.5 4.2h8.3M.5 6h8.3M3.3 2.3v5.4M6 2.3v5.4" stroke="#666" stroke-width=".5"/></svg>
<span class="t" style="left:68.30px;top:132.10px;font-size:8.3px;line-height:8.3px;color:#1e1e1e;transform:scaleX(0.8325);">FILM_CATEGORY</span>
<svg class="a" style="left:44.7px;top:145.34px" width="3.5" height="5"><path d="M0 .3l2.600 2.200L0 4.700z" fill="#5f5f64"/></svg>
<svg class="a" style="left:53.7px;top:143.34px" width="9.5" height="8.5"><rect x=".5" y=".5" width="8.3" height="7.2" fill="#fff" stroke="#3a3a3a" stroke-width="1"/><rect x=".5" y=".5" width="8.3" height="1.8" fill="#3a3a3a"/><path d="M.5 4.2h8.3M.5 6h8.3M3.3 2.3v5.4M6 2.3v5.4" stroke="#666" stroke-width=".5"/></svg>
<span class="t" style="left:68.30px;top:144.10px;font-size:8.3px;line-height:8.3px;color:#1e1e1e;transform:scaleX(0.8274);">FILM_TEXT</span>
<svg class="a" style="left:44.7px;top:157.16px" width="3.5" height="5"><path d="M0 .3l2.600 2.200L0 4.700z" fill="#5f5f64"/></svg>
<svg class="a" style="left:53.7px;top:155.16px" width="9.5" height="8.5"><rect x=".5" y=".5" width="8.3" height="7.2" fill="#fff" stroke="#3a3a3a" stroke-width="1"/><rect x=".5" y=".5" width="8.3" height="1.8" fill="#3a3a3a"/><path d="M.5 4.2h8.3M.5 6h8.3M3.3 2.3v5.4M6 2.3v5.4" stroke="#666" stroke-width=".5"/></svg>
<span class="t" style="left:68.30px;top:156.10px;font-size:8.3px;line-height:8.3px;color:#1e1e1e;transform:scaleX(0.8190);">INVENTORY</span>
<svg class="a" style="left:44.7px;top:168.98px" width="3.5" height="5"><path d="M0 .3l2.600 2.200L0 4.700z" fill="#5f5f64"/></svg>
<svg class="a" style="left:53.7px;top:166.98px" width="9.5" height="8.5"><rect x=".5" y=".5" width="8.3" height="7.2" fill="#fff" stroke="#3a3a3a" stroke-width="1"/><rect x=".5" y=".5" width="8.3" height="1.8" fill="#3a3a3a"/><path d="M.5 4.2h8.3M.5 6h8.3M3.3 2.3v5.4M6 2.3v5.4" stroke="#666" stroke-width=".5"/></svg>
<span class="t" style="left:68.30px;top:167.10px;font-size:8.3px;line-height:8.3px;color:#1e1e1e;transform:scaleX(0.8024);">LANGUAGE</span>
<svg class="a" style="left:44.7px;top:180.80px" width="3.5" height="5"><path d="M0 .3l2.600 2.200L0 4.700z" fill="#5f5f64"/></svg>
<svg class="a" style="left:53.7px;top:178.80px" width="9.5" height="8.5"><rect x=".5" y=".5" width="8.3" height="7.2" fill="#fff" stroke="#3a3a3a" stroke-width="1"/><rect x=".5" y=".5" width="8.3" height="1.8" fill="#3a3a3a"/><path d="M.5 4.2h8.3M.5 6h8.3M3.3 2.3v5.4M6 2.3v5.4" stroke="#666" stroke-width=".5"/></svg>
<span class="t" style="left:68.30px;top:179.10px;font-size:8.3px;line-height:8.3px;color:#1e1e1e;transform:scaleX(0.8566);">PATIENTS</span>
<svg class="a" style="left:44.7px;top:192.62px" width="3.5" height="5"><path d="M0 .3l2.600 2.200L0 4.700z" fill="#5f5f64"/></svg>
<svg class="a" style="left:53.7px;top:190.62px" width="9.5" height="8.5"><rect x=".5" y=".5" width="8.3" height="7.2" fill="#fff" stroke="#3a3a3a" stroke-width="1"/><rect x=".5" y=".5" width="8.3" height="1.8" fill="#3a3a3a"/><path d="M.5 4.2h8.3M.5 6h8.3M3.3 2.3v5.4M6 2.3v5.4" stroke="#666" stroke-width=".5"/></svg>
<span class="t" style="left:68.30px;top:191.10px;font-size:8.3px;line-height:8.3px;color:#1e1e1e;transform:scaleX(0.8232);">PAYMENT</span>
<svg class="a" style="left:44.7px;top:204.44px" width="3.5" height="5"><path d="M0 .3l2.600 2.200L0 4.700z" fill="#5f5f64"/></svg>
<svg class="a" style="left:53.7px;top:202.44px" width="9.5" height="8.5"><rect x=".5" y=".5" width="8.3" height="7.2" fill="#fff" stroke="#3a3a3a" stroke-width="1"/><rect x=".5" y=".5" width="8.3" height="1.8" fill="#3a3a3a"/><path d="M.5 4.2h8.3M.5 6h8.3M3.3 2.3v5.4M6 2.3v5.4" stroke="#666" stroke-width=".5"/></svg>
<span class="t" style="left:68.30px;top:203.10px;font-size:8.3px;line-height:8.3px;color:#1e1e1e;transform:scaleX(0.7737);">PEOPLE</span>
<svg class="a" style="left:44.7px;top:216.26px" width="3.5" height="5"><path d="M0 .3l2.600 2.200L0 4.700z" fill="#5f5f64"/></svg>
<svg class="a" style="left:53.7px;top:214.26px" width="9.5" height="8.5"><rect x=".5" y=".5" width="8.3" height="7.2" fill="#fff" stroke="#3a3a3a" stroke-width="1"/><rect x=".5" y=".5" width="8.3" height="1.8" fill="#3a3a3a"/><path d="M.5 4.2h8.3M.5 6h8.3M3.3 2.3v5.4M6 2.3v5.4" stroke="#666" stroke-width=".5"/></svg>
<span class="t" style="left:68.30px;top:215.10px;font-size:8.3px;line-height:8.3px;color:#1e1e1e;transform:scaleX(0.8218);">RENTAL</span>
<svg class="a" style="left:44.7px;top:228.08px" width="3.5" height="5"><path d="M0 .3l2.600 2.200L0 4.700z" fill="#5f5f64"/></svg>
<svg class="a" style="left:53.7px;top:226.08px" width="9.5" height="8.5"><rect x=".5" y=".5" width="8.3" height="7.2" fill="#fff" stroke="#3a3a3a" stroke-width="1"/><rect x=".5" y=".5" width="8.3" height="1.8" fill="#3a3a3a"/><path d="M.5 4.2h8.3M.5 6h8.3M3.3 2.3v5.4M6 2.3v5.4" stroke="#666" stroke-width=".5"/></svg>
<span class="t" style="left:68.30px;top:226.10px;font-size:8.3px;line-height:8.3px;color:#1e1e1e;transform:scaleX(0.8178);">SALES_FACT</span>
<svg class="a" style="left:44.7px;top:239.90px" width="3.5" height="5"><path d="M0 .3l2.600 2.200L0 4.700z" fill="#5f5f64"/></svg>
<svg class="a" style="left:53.7px;top:237.90px" width="9.5" height="8.5"><rect x=".5" y=".5" width="8.3" height="7.2" fill="#fff" stroke="#3a3a3a" stroke-width="1"/><rect x=".5" y=".5" width="8.3" height="1.8" fill="#3a3a3a"/><path d="M.5 4.2h8.3M.5 6h8.3M3.3 2.3v5.4M6 2.3v5.4" stroke="#666" stroke-width=".5"/></svg>
<span class="t" style="left:68.30px;top:238.10px;font-size:8.3px;line-height:8.3px;color:#1e1e1e;transform:scaleX(0.8178);">SCOTT</span>
<svg class="a" style="left:44.7px;top:251.72px" width="3.5" height="5"><path d="M0 .3l2.600 2.200L0 4.700z" fill="#5f5f64"/></svg>
<svg class="a" style="left:53.7px;top:249.72px" width="9.5" height="8.5"><rect x=".5" y=".5" width="8.3" height="7.2" fill="#fff" stroke="#3a3a3a" stroke-width="1"/><rect x=".5" y=".5" width="8.3" height="1.8" fill="#3a3a3a"/><path d="M.5 4.2h8.3M.5 6h8.3M3.3 2.3v5.4M6 2.3v5.4" stroke="#666" stroke-width=".5"/></svg>
<span class="t" style="left:68.30px;top:250.10px;font-size:8.3px;line-height:8.3px;color:#1e1e1e;transform:scaleX(0.8341);">STAFF</span>
<svg class="a" style="left:44.7px;top:263.54px" width="3.5" height="5"><path d="M0 .3l2.600 2.200L0 4.700z" fill="#5f5f64"/></svg>
<svg class="a" style="left:53.7px;top:261.54px" width="9.5" height="8.5"><rect x=".5" y=".5" width="8.3" height="7.2" fill="#fff" stroke="#3a3a3a" stroke-width="1"/><rect x=".5" y=".5" width="8.3" height="1.8" fill="#3a3a3a"/><path d="M.5 4.2h8.3M.5 6h8.3M3.3 2.3v5.4M6 2.3v5.4" stroke="#666" stroke-width=".5"/></svg>
<span class="t" style="left:68.30px;top:262.10px;font-size:8.3px;line-height:8.3px;color:#1e1e1e;transform:scaleX(0.8088);">STORE</span>
<svg class="a" style="left:44.7px;top:275.36px" width="3.5" height="5"><path d="M0 .3l2.600 2.200L0 4.700z" fill="#5f5f64"/></svg>
<svg class="a" style="left:53.7px;top:273.36px" width="9.5" height="8.5"><rect x=".5" y=".5" width="8.3" height="7.2" fill="#fff" stroke="#3a3a3a" stroke-width="1"/><rect x=".5" y=".5" width="8.3" height="1.8" fill="#3a3a3a"/><path d="M.5 4.2h8.3M.5 6h8.3M3.3 2.3v5.4M6 2.3v5.4" stroke="#666" stroke-width=".5"/></svg>
<span class="t" style="left:68.30px;top:274.10px;font-size:8.3px;line-height:8.3px;color:#1e1e1e;transform:scaleX(0.8304);">TEMPORAL_VALIDITY_TABLE</span>
</div>
<div class="a" style="left:169px;top:121.9px;width:12px;height:281.4px;background:#e8e8ec;"></div>
<div class="a" style="left:172.3px;top:213px;width:6px;height:95.3px;background:#c2c3c9;"></div>
<svg class="a" style="left:172px;top:125.5px" width="6" height="4" viewBox="0 0 6 4"><path d="M0 3.5L3 .3l3 3.2z" fill="#b4b4ba"/></svg>
<svg class="a" style="left:172px;top:396px" width="6" height="4" viewBox="0 0 6 4"><path d="M0 .3L3 3.5 6 .3z" fill="#b4b4ba"/></svg>
<div class="a" style="left:3px;top:403.3px;width:178px;height:10.2px;background:#e8e8ec;"></div>
<div class="a" style="left:14px;top:405.5px;width:137.7px;height:6px;background:#c2c3c9;"></div>
<svg class="a" style="left:6.5px;top:405.5px" width="4" height="6" viewBox="0 0 4 6"><path d="M3.5 0L.3 3l3.2 3z" fill="#b4b4ba"/></svg>
<svg class="a" style="left:161px;top:405.5px" width="4" height="6" viewBox="0 0 4 6"><path d="M.3 0l3.2 3L.3 6z" fill="#b4b4ba"/></svg>
<div class="a" style="left:186px;top:102px;width:508px;height:2px;background:#6b6b6b;"></div>
<div class="a" style="left:262px;top:86px;width:83.3px;height:16.5px;background:#6b6b6b;"></div>
<svg class="a" style="left:193.8px;top:89.2px" width="9" height="9" viewBox="0 0 9 9"><circle cx="4.5" cy="4.4" r="3.6" fill="#f4f4f6" stroke="#8c8c90" stroke-width="1.5"/><path d="M5.9 3.2a1.9 1.9 0 1 0 0 2.5" stroke="#333" fill="none" stroke-width="1"/><path d="M4.5 .3v2" stroke="#eeeef2" stroke-width=".8"/></svg>
<span class="t" style="left:205.60px;top:91.00px;font-size:7.8px;line-height:7.8px;color:#1e1e1e;transform:scaleX(0.9554);">Start Page</span>
<svg class="a" style="left:269.6px;top:87.8px" width="12" height="11" viewBox="0 0 12 11"><path d="M3.6 8.6V2.9a1.4 1.4 0 0 1 1.4-1.4h4.9a1.1 1.1 0 0 1 1.1 1.1v.8M7.9 2.6v5.5a1.4 1.4 0 0 1-1.4 1.4H2a1.1 1.1 0 0 1-1.1-1.1v-.6" fill="none" stroke="#f4f4f4" stroke-width="3"/><rect x="4.2" y="2.6" width="3.2" height="6" fill="#fff"/><path d="M3.6 8.6V2.9a1.4 1.4 0 0 1 1.4-1.4h4.9a1.1 1.1 0 0 1 1.1 1.1v.8M7.9 2.6v5.5a1.4 1.4 0 0 1-1.4 1.4H2a1.1 1.1 0 0 1-1.1-1.1v-.6" fill="none" stroke="#1e1e1e" stroke-width="1.2"/><path d="M1.5 9.4h5" stroke="#1e1e1e" stroke-width="1.3"/></svg>
<div class="a" style="left:282.6px;top:89.7px;width:8.2px;height:8.2px;background:#ff5a3c;border:0.6px solid #d9b0a8;box-sizing:border-box;border-radius:4.1px;"></div>
<span class="t" style="left:294.00px;top:91.00px;font-size:7.8px;line-height:7.8px;color:#d0d0d0;transform:scaleX(0.9649);">SQL.sql*</span>
<svg class="a" style="left:332.5px;top:91px" width="6.5" height="6.5" viewBox="0 0 6.5 6.5"><path d="M.7 .7l5 5M5.7 .7l-5 5" stroke="#d0d0d0" stroke-width="1"/></svg>
<svg class="a" style="left:684px;top:92.5px" width="6" height="4" viewBox="0 0 6 4"><path d="M0 0h6.0L3.0 3.5z" fill="#1e1e1e"/></svg>
<div class="a" style="left:186px;top:104px;width:494px;height:63px;background:#fff;"></div>
<div class="a" style="left:186px;top:104px;width:14px;height:63px;background:#f0f0f4;"></div>
<div class="a" style="left:200px;top:105px;width:3.3px;height:21px;background:#ffee00;"></div>
<div class="a" style="left:212px;top:116px;width:468px;height:9.8px;background:#e8e8fb;"></div>
<div class="a" style="left:212px;top:116px;width:103.5px;height:9.8px;background:#dcdcf3;"></div>
<span class="t" style="left:212.40px;top:107.00px;font-size:8.7px;line-height:8.7px;color:#0000ff;font-family:'Liberation Mono',monospace;transform:scaleX(0.9315);">ALTER SESSION SET</span>
<span class="t" style="left:299.83px;top:107.00px;font-size:8.7px;line-height:8.7px;color:#008080;font-family:'Liberation Mono',monospace;transform:scaleX(0.9315);">NLS_TIMESTAMP_FORMAT</span>
<span class="t" style="left:401.82px;top:107.00px;font-size:8.7px;line-height:8.7px;color:#808080;font-family:'Liberation Mono',monospace;transform:scaleX(0.9307);">=</span>
<span class="t" style="left:411.54px;top:107.00px;font-size:8.7px;line-height:8.7px;color:#ff0000;font-family:'Liberation Mono',monospace;transform:scaleX(0.9316);">'yyyy-MM-dd hh:mm:ss.ffffff'</span>
<span class="t" style="left:547.53px;top:107.00px;font-size:8.7px;line-height:8.7px;color:#808080;font-family:'Liberation Mono',monospace;transform:scaleX(0.9307);">;</span>
<span class="t" style="left:212.40px;top:118.00px;font-size:8.7px;line-height:8.7px;color:#0000ff;font-family:'Liberation Mono',monospace;transform:scaleX(0.9316);">SELECT</span>
<span class="t" style="left:246.40px;top:118.00px;font-size:8.7px;line-height:8.7px;color:#808080;font-family:'Liberation Mono',monospace;transform:scaleX(0.9307);">*</span>
<span class="t" style="left:256.11px;top:118.00px;font-size:8.7px;line-height:8.7px;color:#0000ff;font-family:'Liberation Mono',monospace;transform:scaleX(0.9314);">FROM</span>
<span class="t" style="left:280.40px;top:118.00px;font-size:8.7px;line-height:8.7px;color:#008080;font-family:'Liberation Mono',monospace;transform:scaleX(0.9315);">PAYMENT</span>
<span class="t" style="left:314.40px;top:118.00px;font-size:8.7px;line-height:8.7px;color:#808080;font-family:'Liberation Mono',monospace;transform:scaleX(0.9307);">;</span>
<div class="a" style="left:680px;top:104px;width:12.5px;height:63px;background:#e8e8ec;"></div>
<div class="a" style="left:680px;top:104px;width:12.5px;height:10.5px;background:#f5f5f7;"></div>
<svg class="a" style="left:682.5px;top:105px" width="8" height="8" viewBox="0 0 8 8"><path d="M0 4h8" stroke="#222" stroke-width="1.2"/><path d="M2.5 2.3L4 .5l1.5 1.8zM2.5 5.7L4 7.5l1.5-1.8z" fill="#444"/></svg>
<svg class="a" style="left:683.5px;top:117.5px" width="6" height="4" viewBox="0 0 6 4"><path d="M0 3.5L3 .3l3 3.2z" fill="#b4b4ba"/></svg>
<div class="a" style="left:683px;top:131.3px;width:7px;height:20.4px;background:#c2c3c9;"></div>
<svg class="a" style="left:683.5px;top:160px" width="6" height="4" viewBox="0 0 6 4"><path d="M0 .3L3 3.5 6 .3z" fill="#b4b4ba"/></svg>
<div class="a" style="left:186px;top:167px;width:506.5px;height:12.3px;background:#e8e8ec;"></div>
<div class="a" style="left:186px;top:167px;width:13.5px;height:12.3px;background:#f1f1f5;border:1px solid #dcdce4;box-sizing:border-box;"></div>
<svg class="a" style="left:189px;top:169px" width="8" height="8" viewBox="0 0 8 8"><path d="M4 0v8" stroke="#222" stroke-width="1.2"/><path d="M2.3 2.5L.5 4l1.8 1.5zM5.7 2.5L7.5 4 5.7 5.5z" fill="#444"/></svg>
<svg class="a" style="left:203.5px;top:170px" width="4" height="6" viewBox="0 0 4 6"><path d="M3.5 0L.3 3l3.2 3z" fill="#b4b4ba"/></svg>
<svg class="a" style="left:672px;top:170px" width="4" height="6" viewBox="0 0 4 6"><path d="M.3 0l3.2 3L.3 6z" fill="#b4b4ba"/></svg>
<svg class="a" style="left:191.5px;top:192.4px" width="9.5" height="10" viewBox="0 0 9.5 10"><path d="M7.6 3.3A3.6 3.6 0 1 0 8.3 6" stroke="#1c5fb4" fill="none" stroke-width="1.4"/><path d="M4.6 .1l3.6 .4-.9 3.2z" fill="#1c5fb4"/></svg>
<svg class="a" style="left:209.5px;top:192.9px" width="9.5" height="9.5" viewBox="0 0 9.5 9.5"><path d="M.8 .8L8.7 8.7M8.7 .8L.8 8.7" stroke="#a3a3a8" stroke-width="1.3"/></svg>
<div class="a" style="left:225.4px;top:189.4px;width:1px;height:16px;background:#d3d5e1;"></div>
<svg class="a" style="left:232px;top:192.4px" width="10" height="10" viewBox="0 0 10 10"><path d="M.5 9.5v-5h9v5" fill="#d5d5d9" stroke="#b0b0b5"/><path d="M2 4V1.5h2.5M3.5 .2L5 1.5 3.5 2.8" stroke="#b0b0b5" fill="none"/><path d="M3 6.5h1.5M3 8.2h1.5M6 6.5h1.5M6 8.2h1.5" stroke="#b0b0b5" stroke-width=".8"/></svg>
<svg class="a" style="left:250.5px;top:192.4px" width="10" height="10" viewBox="0 0 10 10"><path d="M.8 5.5l2.8 3.3L8.8 .8" stroke="#b0b0b5" fill="none" stroke-width="1.5"/></svg>
<svg class="a" style="left:268.5px;top:192.9px" width="10" height="10" viewBox="0 0 10 10"><path d="M.8 .8L9.2 9.2M9.2 .8L.8 9.2" stroke="#b0b0b5" stroke-width="1.3"/></svg>
<div class="a" style="left:284.4px;top:189.4px;width:1px;height:16px;background:#d3d5e1;"></div>
<div class="a" style="left:287.2px;top:188.9px;width:18.7px;height:16px;background:#e9eff9;border:1px solid #4a90d9;box-sizing:border-box;border-radius:1.5px;"></div>
<svg class="a" style="left:291.5px;top:191.9px" width="10" height="10.5" viewBox="0 0 10 10.5"><g fill="#222"><rect x="1" y="0" width="2" height="2"/><rect x="4" y="0" width="2" height="2"/><rect x="7" y="0" width="2" height="2"/><rect x="1" y="3" width="2" height="2"/><rect x="4" y="3" width="2" height="2"/><rect x="7" y="3" width="2" height="2"/><rect x="7" y="6" width="2" height="2"/></g><path d="M.5 8.5h6M2 7l-1.5 1.5L2 10M5 7l1.5 1.5L5 10" stroke="#222" fill="none" stroke-width=".9"/></svg>
<svg class="a" style="left:311.5px;top:193.9px" width="7.5" height="7" viewBox="0 0 7.5 7"><path d="M4.5 0L0 3.5 4.5 7z" fill="#b4b4ba"/><rect x="5.5" y="0" width="1.3" height="7" fill="#b4b4ba"/></svg>
<svg class="a" style="left:331px;top:193.9px" width="4" height="7" viewBox="0 0 4 7"><path d="M4 0L0 3.5 4 7z" fill="#b4b4ba"/></svg>
<div class="a" style="left:344.8px;top:190.1px;width:43.8px;height:13.4px;background:#fff;border:1px solid #d0d2e0;box-sizing:border-box;"></div>
<span class="t" style="left:349.00px;top:193.00px;font-size:8.3px;line-height:8.3px;color:#1e1e1e;transform:scaleX(0.8393);">1000</span>
<svg class="a" style="left:380.5px;top:195.4px" width="5" height="3.5" viewBox="0 0 5 3.5"><path d="M0 0h5L2.5 3z" fill="#666"/></svg>
<svg class="a" style="left:398.7px;top:194.2px" width="3.5" height="6" viewBox="0 0 3.5 6"><path d="M0 0l3.5 3L0 6z" fill="#222"/></svg>
<svg class="a" style="left:416px;top:194.2px" width="6.5" height="6" viewBox="0 0 6.5 6"><rect x="0" y="0" width="1.1" height="6" fill="#222"/><path d="M2.3 0L6.3 3 2.3 6z" fill="#222"/></svg>
<div class="a" style="left:430.7px;top:189.4px;width:1px;height:16px;background:#d3d5e1;"></div>
<div class="a" style="left:433px;top:188.4px;width:18px;height:16.5px;background:#e9eff9;border:1px solid #4a90d9;box-sizing:border-box;border-radius:1.5px;"></div>
<svg class="a" style="left:437.5px;top:192.4px" width="9.5" height="9" viewBox="0 0 9.5 9"><rect x=".5" y=".5" width="8.5" height="8" fill="#fff" stroke="#222"/><path d="M.5 3.2h8.5M.5 5.9h8.5M3.3 .5v8M6.2 .5v8" stroke="#222" stroke-width=".8"/></svg>
<svg class="a" style="left:455px;top:191.9px" width="10.2" height="10.2" viewBox="0 0 10.2 10.2"><rect x=".6" y=".6" width="9" height="9" fill="#fff" stroke="#222" stroke-width="1.2"/><rect x="2" y="2" width="2.6" height="2.6" fill="#222"/><rect x="5.6" y="2" width="2.6" height="2.6" fill="#222"/><rect x="2" y="5.6" width="2.6" height="2.6" fill="#222"/><rect x="5.6" y="5.6" width="2.6" height="2.6" fill="#222"/></svg>
<div class="a" style="left:471.2px;top:189.4px;width:1px;height:16px;background:#d3d5e1;"></div>
<svg class="a" style="left:478.5px;top:191.9px" width="10" height="10" viewBox="0 0 10 10"><rect x=".5" y=".5" width="9" height="9" fill="#dcdce0" stroke="#b0b0b5"/><path d="M.5 2.8h9M3.5 .5v9M6.5 .5v9" stroke="#b0b0b5" stroke-width=".9"/></svg>
<svg class="a" style="left:495.5px;top:191.9px" width="10.5" height="10.5" viewBox="0 0 10.5 10.5"><circle cx="6.5" cy="3.2" r="2.5" fill="none" stroke="#555" stroke-width="1"/><path d="M8.3 5l1.7 2" stroke="#555" stroke-width="1.3"/><path d="M2.5 3v6M.5 7l2 2.5L4.5 7" stroke="#1c5fb4" fill="none" stroke-width="1.3"/></svg>
<svg class="a" style="left:514.5px;top:191.9px" width="10.5" height="10.5" viewBox="0 0 10.5 10.5"><rect x="3" y="3.5" width="7" height="6.5" fill="#333"/><path d="M3 5.5h7M5.3 5.5v4.5M7.6 5.5v4.5M3 7.7h7" stroke="#fff" stroke-width=".6"/><path d="M4.5 2A2.5 2.5 0 0 0 1 3.5" stroke="#1c5fb4" fill="none" stroke-width="1.2"/><path d="M0 1.5l1 3 2.3-1.7z" fill="#1c5fb4"/></svg>
<svg class="a" style="left:685.5px;top:194.4px" width="6" height="7" viewBox="0 0 6 7"><rect x="0.5" y="0.5" width="5" height="1" fill="#555"/><path d="M0.5 3h5L3 6z" fill="#555"/></svg>
<div class="a" style="left:186px;top:206.8px;width:506.7px;height:176px;background:#fff;"></div>
<div class="a" style="left:186px;top:206.8px;width:445px;height:22.8px;background:#f8f8fb;"></div>
<div class="a" style="left:198.6px;top:229px;width:432.4px;height:14.6px;background:#e9e9ee;"></div>
<div class="a" style="left:198.6px;top:229px;width:52px;height:14.6px;background:#dce8f8;"></div>
<div class="a" style="left:186px;top:207.2px;width:12.6px;height:175.5px;background:#fafafc;"></div>
<div class="a" style="left:186px;top:207.2px;width:498px;height:175.5px;overflow:hidden">
<div class="a" style="left:12.1px;top:0;width:1px;height:176px;background:#d4d5e4"></div>
<div class="a" style="left:64.1px;top:0;width:1px;height:176px;background:#d4d5e4"></div>
<div class="a" style="left:121.8px;top:0;width:1px;height:176px;background:#d4d5e4"></div>
<div class="a" style="left:169px;top:0;width:1px;height:176px;background:#d4d5e4"></div>
<div class="a" style="left:217.6px;top:0;width:1px;height:176px;background:#d4d5e4"></div>
<div class="a" style="left:269.9px;top:0;width:1px;height:176px;background:#d4d5e4"></div>
<div class="a" style="left:336.5px;top:0;width:1px;height:176px;background:#d4d5e4"></div>
<div class="a" style="left:0;top:22px;width:445px;height:1px;background:#d4d5e4"></div>
<div class="a" style="left:12.6px;top:35.91px;width:432.4px;height:1px;background:#d4d5e4"></div>
<div class="a" style="left:12.6px;top:50.52px;width:432.4px;height:1px;background:#d4d5e4"></div>
<div class="a" style="left:12.6px;top:65.13px;width:432.4px;height:1px;background:#d4d5e4"></div>
<div class="a" style="left:12.6px;top:79.74px;width:432.4px;height:1px;background:#d4d5e4"></div>
<div class="a" style="left:12.6px;top:94.35px;width:432.4px;height:1px;background:#d4d5e4"></div>
<div class="a" style="left:12.6px;top:108.96px;width:432.4px;height:1px;background:#d4d5e4"></div>
<div class="a" style="left:12.6px;top:123.57px;width:432.4px;height:1px;background:#d4d5e4"></div>
<div class="a" style="left:12.6px;top:138.18px;width:432.4px;height:1px;background:#d4d5e4"></div>
<div class="a" style="left:12.6px;top:152.79px;width:432.4px;height:1px;background:#d4d5e4"></div>
<div class="a" style="left:12.6px;top:167.40px;width:432.4px;height:1px;background:#d4d5e4"></div>
<div class="a" style="left:12.6px;top:182.01px;width:432.4px;height:1px;background:#d4d5e4"></div>
</div>
<svg class="a" style="left:190.9px;top:234.2px" width="3.5" height="5.5" viewBox="0 0 3.5 5.5"><path d="M0 0l3.2 2.6L0 5.2z" fill="#5a5a5a"/></svg>
<span class="t" style="left:201.60px;top:210.00px;font-size:8.3px;line-height:8.3px;color:#1e1e1e;transform:scaleX(0.8417);">PAYMENT_ID</span>
<span class="t" style="left:202.00px;top:220.00px;font-size:6.2px;line-height:6.2px;color:#9c9ca2;transform:scaleX(1.0257);">NUMBER(38)</span>
<span class="t" style="left:252.90px;top:210.00px;font-size:8.3px;line-height:8.3px;color:#1e1e1e;transform:scaleX(0.8282);">CUSTOMER_ID</span>
<span class="t" style="left:253.50px;top:220.00px;font-size:6.2px;line-height:6.2px;color:#9c9ca2;transform:scaleX(1.0310);">NUMBER(38)</span>
<span class="t" style="left:311.40px;top:210.00px;font-size:8.3px;line-height:8.3px;color:#1e1e1e;transform:scaleX(0.8632);">STAFF_ID</span>
<span class="t" style="left:311.90px;top:220.00px;font-size:6.2px;line-height:6.2px;color:#9c9ca2;transform:scaleX(1.0257);">NUMBER(38)</span>
<span class="t" style="left:357.30px;top:210.00px;font-size:8.3px;line-height:8.3px;color:#1e1e1e;transform:scaleX(0.8505);">RENTAL_ID</span>
<span class="t" style="left:357.60px;top:220.00px;font-size:6.2px;line-height:6.2px;color:#9c9ca2;transform:scaleX(1.0257);">NUMBER(38)</span>
<span class="t" style="left:406.70px;top:210.00px;font-size:8.3px;line-height:8.3px;color:#1e1e1e;transform:scaleX(0.8205);">AMOUNT</span>
<span class="t" style="left:407.80px;top:220.00px;font-size:6.2px;line-height:6.2px;color:#9c9ca2;transform:scaleX(1.0323);">NUMBER(5, 2)</span>
<span class="t" style="left:459.00px;top:210.00px;font-size:8.3px;line-height:8.3px;color:#1e1e1e;transform:scaleX(0.8229);">PAYMENT_DATE</span>
<span class="t" style="left:459.50px;top:220.00px;font-size:6.2px;line-height:6.2px;color:#9c9ca2;transform:scaleX(1.1217);">DATE</span>
<span class="t" style="left:526.80px;top:210.00px;font-size:8.3px;line-height:8.3px;color:#1e1e1e;transform:scaleX(0.8184);">LAST_UPDATE</span>
<span class="t" style="left:527.30px;top:220.00px;font-size:6.2px;line-height:6.2px;color:#9c9ca2;transform:scaleX(1.0763);">TIMESTAMP(6)</span>
<div class="a" style="left:186px;top:229px;width:498px;height:153.5px;overflow:hidden">
<span class="t" style="left:49.57px;top:3.00px;font-size:8.3px;line-height:8.3px;color:#1e1e1e;transform:scaleX(0.9050);">363</span>
<span class="t" style="left:107.97px;top:3.00px;font-size:8.3px;line-height:8.3px;color:#1e1e1e;transform:scaleX(0.9050);">442</span>
<span class="t" style="left:153.77px;top:3.00px;font-size:8.3px;line-height:8.3px;color:#1e1e1e;transform:scaleX(0.9050);">423</span>
<span class="t" style="left:203.27px;top:3.00px;font-size:8.3px;line-height:8.3px;color:#1e1e1e;transform:scaleX(0.9050);">427</span>
<span class="t" style="left:253.48px;top:3.00px;font-size:8.3px;line-height:8.3px;color:#1e1e1e;transform:scaleX(0.9050);">81.5</span>
<span class="t" style="left:273.70px;top:3.00px;font-size:8.3px;line-height:8.3px;color:#1e1e1e;transform:scaleX(0.8981);">19 10 1972</span>
<span class="t" style="left:340.80px;top:3.00px;font-size:8.3px;line-height:8.3px;color:#1e1e1e;transform:scaleX(0.9312);">2023-05-15 11:49:54.000000</span>
<span class="t" style="left:49.57px;top:18.00px;font-size:8.3px;line-height:8.3px;color:#1e1e1e;transform:scaleX(0.9050);">364</span>
<span class="t" style="left:112.14px;top:18.00px;font-size:8.3px;line-height:8.3px;color:#1e1e1e;transform:scaleX(0.9050);">28</span>
<span class="t" style="left:153.77px;top:18.00px;font-size:8.3px;line-height:8.3px;color:#1e1e1e;transform:scaleX(0.9050);">923</span>
<span class="t" style="left:203.27px;top:18.00px;font-size:8.3px;line-height:8.3px;color:#1e1e1e;transform:scaleX(0.9050);">466</span>
<span class="t" style="left:253.48px;top:18.00px;font-size:8.3px;line-height:8.3px;color:#1e1e1e;transform:scaleX(0.9050);">98.7</span>
<span class="t" style="left:273.70px;top:18.00px;font-size:8.3px;line-height:8.3px;color:#1e1e1e;transform:scaleX(0.8981);">07 07 1974</span>
<span class="t" style="left:340.80px;top:18.00px;font-size:8.3px;line-height:8.3px;color:#1e1e1e;transform:scaleX(0.9312);">2023-05-15 11:49:55.000000</span>
<span class="t" style="left:49.57px;top:32.00px;font-size:8.3px;line-height:8.3px;color:#1e1e1e;transform:scaleX(0.9050);">365</span>
<span class="t" style="left:107.97px;top:32.00px;font-size:8.3px;line-height:8.3px;color:#1e1e1e;transform:scaleX(0.9050);">945</span>
<span class="t" style="left:153.77px;top:32.00px;font-size:8.3px;line-height:8.3px;color:#1e1e1e;transform:scaleX(0.9050);">730</span>
<span class="t" style="left:203.27px;top:32.00px;font-size:8.3px;line-height:8.3px;color:#1e1e1e;transform:scaleX(0.9050);">292</span>
<span class="t" style="left:249.31px;top:32.00px;font-size:8.3px;line-height:8.3px;color:#1e1e1e;transform:scaleX(0.9050);">25.02</span>
<span class="t" style="left:273.70px;top:32.00px;font-size:8.3px;line-height:8.3px;color:#1e1e1e;transform:scaleX(0.8981);">01 01 1970</span>
<span class="t" style="left:340.80px;top:32.00px;font-size:8.3px;line-height:8.3px;color:#1e1e1e;transform:scaleX(0.9312);">2023-05-15 11:49:55.000000</span>
<span class="t" style="left:49.57px;top:47.00px;font-size:8.3px;line-height:8.3px;color:#1e1e1e;transform:scaleX(0.9050);">366</span>
<span class="t" style="left:107.97px;top:47.00px;font-size:8.3px;line-height:8.3px;color:#1e1e1e;transform:scaleX(0.9050);">731</span>
<span class="t" style="left:153.77px;top:47.00px;font-size:8.3px;line-height:8.3px;color:#1e1e1e;transform:scaleX(0.9050);">474</span>
<span class="t" style="left:203.27px;top:47.00px;font-size:8.3px;line-height:8.3px;color:#1e1e1e;transform:scaleX(0.9050);">120</span>
<span class="t" style="left:249.31px;top:47.00px;font-size:8.3px;line-height:8.3px;color:#1e1e1e;transform:scaleX(0.9050);">69.07</span>
<span class="t" style="left:273.70px;top:47.00px;font-size:8.3px;line-height:8.3px;color:#1e1e1e;transform:scaleX(0.9115);">30 08 2011</span>
<span class="t" style="left:340.80px;top:47.00px;font-size:8.3px;line-height:8.3px;color:#1e1e1e;transform:scaleX(0.9312);">2023-05-15 11:49:55.000000</span>
<span class="t" style="left:49.57px;top:62.00px;font-size:8.3px;line-height:8.3px;color:#1e1e1e;transform:scaleX(0.9050);">367</span>
<span class="t" style="left:107.97px;top:62.00px;font-size:8.3px;line-height:8.3px;color:#1e1e1e;transform:scaleX(0.9050);">222</span>
<span class="t" style="left:153.77px;top:62.00px;font-size:8.3px;line-height:8.3px;color:#1e1e1e;transform:scaleX(0.9050);">819</span>
<span class="t" style="left:203.27px;top:62.00px;font-size:8.3px;line-height:8.3px;color:#1e1e1e;transform:scaleX(0.9050);">848</span>
<span class="t" style="left:249.31px;top:62.00px;font-size:8.3px;line-height:8.3px;color:#1e1e1e;transform:scaleX(0.9050);">55.97</span>
<span class="t" style="left:273.70px;top:62.00px;font-size:8.3px;line-height:8.3px;color:#1e1e1e;transform:scaleX(0.8981);">02 12 1980</span>
<span class="t" style="left:340.80px;top:62.00px;font-size:8.3px;line-height:8.3px;color:#1e1e1e;transform:scaleX(0.9312);">2023-05-15 11:49:55.000000</span>
<span class="t" style="left:49.57px;top:76.00px;font-size:8.3px;line-height:8.3px;color:#1e1e1e;transform:scaleX(0.9050);">368</span>
<span class="t" style="left:107.97px;top:76.00px;font-size:8.3px;line-height:8.3px;color:#1e1e1e;transform:scaleX(0.9050);">717</span>
<span class="t" style="left:157.94px;top:76.00px;font-size:8.3px;line-height:8.3px;color:#1e1e1e;transform:scaleX(0.9050);">31</span>
<span class="t" style="left:203.27px;top:76.00px;font-size:8.3px;line-height:8.3px;color:#1e1e1e;transform:scaleX(0.9050);">945</span>
<span class="t" style="left:249.31px;top:76.00px;font-size:8.3px;line-height:8.3px;color:#1e1e1e;transform:scaleX(0.9050);">78.43</span>
<span class="t" style="left:273.70px;top:76.00px;font-size:8.3px;line-height:8.3px;color:#1e1e1e;transform:scaleX(0.9115);">06 11 1985</span>
<span class="t" style="left:340.80px;top:76.00px;font-size:8.3px;line-height:8.3px;color:#1e1e1e;transform:scaleX(0.9312);">2023-05-15 11:49:55.000000</span>
<span class="t" style="left:49.57px;top:91.00px;font-size:8.3px;line-height:8.3px;color:#1e1e1e;transform:scaleX(0.9050);">369</span>
<span class="t" style="left:107.97px;top:91.00px;font-size:8.3px;line-height:8.3px;color:#1e1e1e;transform:scaleX(0.9050);">367</span>
<span class="t" style="left:153.77px;top:91.00px;font-size:8.3px;line-height:8.3px;color:#1e1e1e;transform:scaleX(0.9050);">331</span>
<span class="t" style="left:199.93px;top:91.00px;font-size:8.3px;line-height:8.3px;color:#333;font-style:italic;transform:scaleX(0.8600);">(null)</span>
<span class="t" style="left:249.31px;top:91.00px;font-size:8.3px;line-height:8.3px;color:#1e1e1e;transform:scaleX(0.9050);">97.47</span>
<span class="t" style="left:273.70px;top:91.00px;font-size:8.3px;line-height:8.3px;color:#1e1e1e;transform:scaleX(0.8981);">28 08 1979</span>
<span class="t" style="left:340.80px;top:91.00px;font-size:8.3px;line-height:8.3px;color:#1e1e1e;transform:scaleX(0.9312);">2023-05-15 11:49:55.000000</span>
<span class="t" style="left:49.57px;top:106.00px;font-size:8.3px;line-height:8.3px;color:#1e1e1e;transform:scaleX(0.9050);">370</span>
<span class="t" style="left:107.97px;top:106.00px;font-size:8.3px;line-height:8.3px;color:#1e1e1e;transform:scaleX(0.9050);">149</span>
<span class="t" style="left:153.77px;top:106.00px;font-size:8.3px;line-height:8.3px;color:#1e1e1e;transform:scaleX(0.9050);">241</span>
<span class="t" style="left:203.27px;top:106.00px;font-size:8.3px;line-height:8.3px;color:#1e1e1e;transform:scaleX(0.9050);">765</span>
<span class="t" style="left:253.48px;top:106.00px;font-size:8.3px;line-height:8.3px;color:#1e1e1e;transform:scaleX(0.9050);">24.9</span>
<span class="t" style="left:273.70px;top:106.00px;font-size:8.3px;line-height:8.3px;color:#1e1e1e;transform:scaleX(0.8981);">02 12 2009</span>
<span class="t" style="left:340.80px;top:106.00px;font-size:8.3px;line-height:8.3px;color:#1e1e1e;transform:scaleX(0.9312);">2023-05-15 11:49:55.000000</span>
<span class="t" style="left:49.57px;top:120.00px;font-size:8.3px;line-height:8.3px;color:#1e1e1e;transform:scaleX(0.9050);">371</span>
<span class="t" style="left:107.97px;top:120.00px;font-size:8.3px;line-height:8.3px;color:#1e1e1e;transform:scaleX(0.9050);">379</span>
<span class="t" style="left:153.77px;top:120.00px;font-size:8.3px;line-height:8.3px;color:#1e1e1e;transform:scaleX(0.9050);">732</span>
<span class="t" style="left:203.27px;top:120.00px;font-size:8.3px;line-height:8.3px;color:#1e1e1e;transform:scaleX(0.9050);">381</span>
<span class="t" style="left:249.31px;top:120.00px;font-size:8.3px;line-height:8.3px;color:#1e1e1e;transform:scaleX(0.9050);">57.43</span>
<span class="t" style="left:273.70px;top:120.00px;font-size:8.3px;line-height:8.3px;color:#1e1e1e;transform:scaleX(0.8981);">01 01 1970</span>
<span class="t" style="left:340.80px;top:120.00px;font-size:8.3px;line-height:8.3px;color:#1e1e1e;transform:scaleX(0.9312);">2023-05-15 11:49:56.000000</span>
<span class="t" style="left:49.57px;top:135.00px;font-size:8.3px;line-height:8.3px;color:#1e1e1e;transform:scaleX(0.9050);">372</span>
<span class="t" style="left:107.97px;top:135.00px;font-size:8.3px;line-height:8.3px;color:#1e1e1e;transform:scaleX(0.9050);">308</span>
<span class="t" style="left:153.77px;top:135.00px;font-size:8.3px;line-height:8.3px;color:#1e1e1e;transform:scaleX(0.9050);">710</span>
<span class="t" style="left:199.93px;top:135.00px;font-size:8.3px;line-height:8.3px;color:#333;font-style:italic;transform:scaleX(0.8600);">(null)</span>
<span class="t" style="left:249.31px;top:135.00px;font-size:8.3px;line-height:8.3px;color:#1e1e1e;transform:scaleX(0.9050);">76.04</span>
<span class="t" style="left:273.70px;top:135.00px;font-size:8.3px;line-height:8.3px;color:#1e1e1e;transform:scaleX(0.8981);">01 01 1970</span>
<span class="t" style="left:340.80px;top:135.00px;font-size:8.3px;line-height:8.3px;color:#1e1e1e;transform:scaleX(0.9312);">2023-05-15 11:49:56.000000</span>
<span class="t" style="left:49.57px;top:149.00px;font-size:8.3px;line-height:8.3px;color:#1e1e1e;transform:scaleX(0.9050);">373</span>
<span class="t" style="left:107.97px;top:149.00px;font-size:8.3px;line-height:8.3px;color:#1e1e1e;transform:scaleX(0.9050);">471</span>
<span class="t" style="left:153.77px;top:149.00px;font-size:8.3px;line-height:8.3px;color:#1e1e1e;transform:scaleX(0.9050);">140</span>
<span class="t" style="left:203.27px;top:149.00px;font-size:8.3px;line-height:8.3px;color:#1e1e1e;transform:scaleX(0.9050);">930</span>
<span class="t" style="left:259.74px;top:149.00px;font-size:8.3px;line-height:8.3px;color:#1e1e1e;transform:scaleX(0.9050);">09</span>
<span class="t" style="left:273.70px;top:149.00px;font-size:8.3px;line-height:8.3px;color:#1e1e1e;transform:scaleX(0.8981);">16 05 2020</span>
<span class="t" style="left:340.80px;top:149.00px;font-size:8.3px;line-height:8.3px;color:#1e1e1e;transform:scaleX(0.9312);">2023-05-15 11:49:56.000000</span>
</div>
<div class="a" style="left:186px;top:383.2px;width:506.7px;height:12.2px;background:#e8e8ec;"></div>
<div class="a" style="left:186px;top:383.3px;width:130px;height:11.7px;background:#f7f7f9;"></div>
<svg class="a" style="left:189px;top:386.5px" width="5.5" height="5" viewBox="0 0 5.5 5"><rect width="1" height="5" fill="#b4b4ba"/><path d="M5.5 0L1.5 2.5 5.5 5z" fill="#b4b4ba"/></svg>
<svg class="a" style="left:199.5px;top:386.5px" width="3" height="5" viewBox="0 0 3 5"><path d="M3 0L0 2.5 3 5z" fill="#b4b4ba"/></svg>
<span class="t" style="left:208.00px;top:385.00px;font-size:8.3px;line-height:8.3px;color:#333;transform:scaleX(0.9034);">Record 1 of 1</span>
<svg class="a" style="left:261px;top:386.5px" width="3" height="5" viewBox="0 0 3 5"><path d="M0 0l3 2.5L0 5z" fill="#b4b4ba"/></svg>
<svg class="a" style="left:269.5px;top:386.5px" width="5.5" height="5" viewBox="0 0 5.5 5"><path d="M0 0l4 2.5L0 5z" fill="#b4b4ba"/><rect x="4.5" width="1" height="5" fill="#b4b4ba"/></svg>
<svg class="a" style="left:278.5px;top:386px" width="6" height="6" viewBox="0 0 6 6"><path d="M0 3h6M3 0v6" stroke="#b4b4ba" stroke-width="1"/></svg>
<svg class="a" style="left:288.5px;top:386px" width="5.5" height="6" viewBox="0 0 5.5 6"><path d="M0 3h5.5" stroke="#b4b4ba" stroke-width="1"/></svg>
<svg class="a" style="left:297.5px;top:385.5px" width="6" height="6" viewBox="0 0 6 6"><path d="M.5 3.5l1.8 2L5.5 .5" stroke="#b4b4ba" fill="none" stroke-width="1"/></svg>
<svg class="a" style="left:307.5px;top:386px" width="6" height="6" viewBox="0 0 6 6"><path d="M.7 .7l4.6 4.6M5.3 .7L.7 5.3" stroke="#8e8e93" stroke-width="1.3"/></svg>
<svg class="a" style="left:319.5px;top:386px" width="4" height="6" viewBox="0 0 4 6"><path d="M3.5 0L.3 3l3.2 3z" fill="#8e8e93"/></svg>
<svg class="a" style="left:684.8px;top:386.2px" width="4" height="6" viewBox="0 0 4 6"><path d="M.3 0l3.2 3L.3 6z" fill="#a8a8ae"/></svg>
<div class="a" style="left:523px;top:205.3px;width:108.5px;height:179.7px;border:2px solid #1e8fff;box-sizing:border-box;"></div>
<div class="a" style="left:186px;top:395.4px;width:506.7px;height:19.4px;background:#f1f1f5;"></div>
<div class="a" style="left:184.2px;top:414.8px;width:509.5px;height:1px;background:#d9dbe7;"></div>
<div class="a" style="left:184.2px;top:104px;width:1.7px;height:311px;background:#dcdeea;"></div>
<div class="a" style="left:692.7px;top:104px;width:1px;height:311px;background:#d9dbe7;"></div>
<div class="a" style="left:186.2px;top:396.8px;width:36.8px;height:16.8px;background:#e9eff9;border:1px solid #4a90d9;box-sizing:border-box;border-radius:1.5px;"></div>
<svg class="a" style="left:190.4px;top:400.6px" width="9.84" height="9.02" viewBox="0 0 12 11"><rect x="4.2" y="2.6" width="3.2" height="6" fill="#fff"/><path d="M3.6 8.6V2.9a1.4 1.4 0 0 1 1.4-1.4h4.9a1.1 1.1 0 0 1 1.1 1.1v.8M7.9 2.6v5.5a1.4 1.4 0 0 1-1.4 1.4H2a1.1 1.1 0 0 1-1.1-1.1v-.6" fill="none" stroke="#1e1e1e" stroke-width="1.2"/><path d="M1.5 9.4h5" stroke="#1e1e1e" stroke-width="1.3"/></svg>
<span class="t" style="left:204.00px;top:401.00px;font-size:8.3px;line-height:8.3px;color:#1e1e1e;transform:scaleX(1.0185);">Text</span>
<div class="a" style="left:225.8px;top:398px;width:1px;height:14px;background:#d3d5e1;"></div>
<svg class="a" style="left:232.3px;top:402px" width="8.5" height="7.5" viewBox="0 0 8.5 7.5"><path d="M1 2h7M.5 5.300h7" stroke="#333" stroke-width=".9"/><path d="M2.300 .3L.2 2l2.100 1.700zM6.200 3.600l2.100 1.700-2.100 1.700z" fill="#333"/></svg>
<div class="a" style="left:248.5px;top:398px;width:1px;height:14px;background:#d3d5e1;"></div>
<svg class="a" style="left:255.8px;top:401.5px" width="8.5" height="8.5" viewBox="0 0 8.5 8.5"><rect x=".5" y=".5" width="7.500" height="7.500" fill="#fff" stroke="#333" stroke-width=".9"/><path d="M.5 3h7.500M.5 5.500h7.500M3 .5v7.500M5.500 .5v7.500" stroke="#444" stroke-width=".6"/></svg>
<span class="t" style="left:268.40px;top:401.00px;font-size:8.3px;line-height:8.3px;color:#1e1e1e;transform:scaleX(0.8898);">Data</span>
<svg class="a" style="left:296px;top:403px" width="3.2" height="5" viewBox="0 0 3.2 5"><path d="M3.2 0L0 2.5 3.2 5z" fill="#222"/></svg>
<svg class="a" style="left:313.7px;top:403px" width="3.2" height="5" viewBox="0 0 3.2 5"><path d="M0 0l3.2 2.5L0 5z" fill="#222"/></svg>
<div class="a" style="left:334.6px;top:398px;width:1px;height:14px;background:#d3d5e1;"></div>
<svg class="a" style="left:341.5px;top:400.2px" width="10.5" height="10.5" viewBox="0 0 10.5 10.5"><path d="M3.3 0v3.2" stroke="#1c5fb4" stroke-width="1.2"/><path d="M1.3 2l2 2.2 2-2.2z" fill="#1c5fb4"/><path d="M.5 4.8v3.2a2.8 1.2 0 0 0 5.6 0V4.8" fill="#3a3a3a"/><ellipse cx="3.3" cy="4.8" rx="2.8" ry="1.1" fill="#8a8a8e" stroke="#3a3a3a" stroke-width=".5"/><circle cx="7.3" cy="7.7" r="2.7" fill="#e02b20"/><circle cx="7.3" cy="7.7" r="1.1" fill="#fff"/></svg>
<span class="t" style="left:357.80px;top:401.00px;font-size:8.3px;line-height:8.3px;color:#1e1e1e;transform:scaleX(1.0070);">AutoCommit OFF</span>
<div class="a" style="left:429.6px;top:398px;width:1px;height:14px;background:#d3d5e1;"></div>
<div class="a" style="left:437.1px;top:402.3px;width:7px;height:7px;background:#f4533b;border-radius:3.5px;"></div>
<span class="t" style="left:452.80px;top:401.00px;font-size:8.3px;line-height:8.3px;color:#1e1e1e;transform:scaleX(1.0209);">Production</span>
<div class="a" style="left:499.8px;top:398px;width:1px;height:14px;background:#d3d5e1;"></div>
<svg class="a" style="left:506px;top:401px" width="9.5" height="9.5" viewBox="0 0 9.5 9.5"><circle cx="4.7" cy="4.7" r="4.5" fill="#2b9a3e"/><path d="M2.5 4.8l1.6 1.7 3-3.5" stroke="#fff" fill="none" stroke-width="1.3"/></svg>
<span class="t" style="left:523.00px;top:401.00px;font-size:8.3px;line-height:8.3px;color:#1e1e1e;transform:scaleX(0.9786);">Query executed successfully.</span>
<div class="a" style="left:634.6px;top:398px;width:1px;height:14px;background:#d3d5e1;"></div>
<span class="t" style="left:640.00px;top:401.00px;font-size:8.3px;line-height:8.3px;color:#1e1e1e;transform:scaleX(0.8986);">0:00:00.018</span>
<svg class="a" style="left:685.7px;top:404.7px" width="6" height="7" viewBox="0 0 6 7"><rect x="0.5" y="0.5" width="5" height="1" fill="#555"/><path d="M0.5 3h5L3 6z" fill="#555"/></svg>
<svg class="a" style="left:6.5px;top:428px" width="10" height="8.5" viewBox="0 0 10 8.5"><path d="M3 .5H.5v7.5H9V.5H7" fill="none" stroke="#333" stroke-width="1"/><path d="M2.5 4.2h4" stroke="#333" stroke-width="1.2"/><path d="M5.5 2l2.3 2.2L5.5 6.4z" fill="#333"/></svg>
<span class="t" style="left:18.70px;top:429.00px;font-size:7.8px;line-height:7.8px;color:#1e1e1e;transform:scaleX(1.0083);">Output</span>
<svg class="a" style="left:50px;top:426.5px" width="9" height="10.5" viewBox="0 0 9 10.5"><rect x=".5" y="1.5" width="6" height="7.5" fill="#fff" stroke="#333"/><rect x="2" y=".3" width="3" height="2" fill="#333"/><circle cx="6" cy="7.5" r="2.7" fill="#e02b20"/><circle cx="6" cy="7.5" r="1" fill="#fff"/></svg>
<span class="t" style="left:60.00px;top:429.00px;font-size:7.8px;line-height:7.8px;color:#1e1e1e;transform:scaleX(0.9481);">Error List</span>
<div class="a" style="left:4px;top:441.3px;width:40.3px;height:2.2px;background:#c9c9cf;"></div>
<div class="a" style="left:46px;top:441.3px;width:46.7px;height:2.2px;background:#c9c9cf;"></div>
<div class="a" style="left:0px;top:444px;width:696px;height:20px;background:#007acc;"></div>
<span class="t" style="left:547.30px;top:449.00px;font-size:8.3px;line-height:8.3px;color:#fff;transform:scaleX(0.9284);">Ln 2</span>
<span class="t" style="left:571.20px;top:449.00px;font-size:8.3px;line-height:8.3px;color:#fff;transform:scaleX(0.9339);">Col 23</span>
<span class="t" style="left:602.60px;top:449.00px;font-size:8.3px;line-height:8.3px;color:#fff;transform:scaleX(0.9124);">Ch 23</span>
<svg class="a" style="left:686px;top:454px" width="9" height="9" viewBox="0 0 9 9"><path d="M8 1v1M8 4v1M5 4v1M8 7v1M5 7v1M2 7v1" stroke="#5fb0e8" stroke-width="1"/></svg>
</body></html>
